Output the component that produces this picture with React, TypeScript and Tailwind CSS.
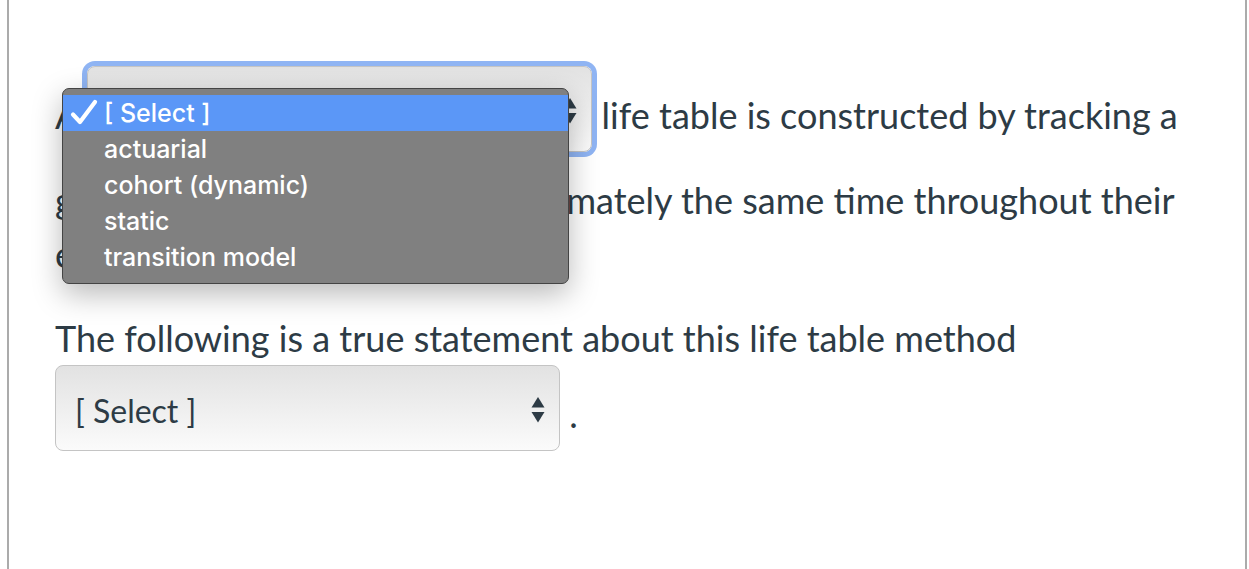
import React from "react";

const options = ["[ Select ]", "actuarial", "cohort (dynamic)", "static", "transition model"];

function Arrows() {
  return (
    <svg width="14" height="30" viewBox="0 0 14 30" className="shrink-0">
      <path d="M7 2 L13.5 12.5 L0.5 12.5 Z" fill="#2d3b45" />
      <path d="M0.5 17 L13.5 17 L7 27.5 Z" fill="#2d3b45" />
    </svg>
  );
}

function Check() {
  return (
    <svg width="28" height="28" viewBox="0 0 28 28">
      <path
        d="M3 15.5 L10 23 L25 3"
        fill="none"
        stroke="#fff"
        strokeWidth="4.2"
        strokeLinecap="round"
        strokeLinejoin="round"
      />
    </svg>
  );
}

function FakeSelect({ focused, label }: { focused?: boolean; label?: string }) {
  return (
    <span
      className={
        "inline-block align-[5px] w-[505px] h-[86px] rounded-[8px] border border-[#c4c4c4] bg-gradient-to-b from-[#e2e2e2] to-[#fbfbfb] text-[32px] " +
        (focused ? "shadow-[0_0_0_5px_#8fb4f3] mb-[21px]" : "")
      }
    >
      <span className="flex items-start justify-between pl-[19px] pr-[14px] pt-[25px] leading-[40px]">
        <span className="text-[#2d3b45]">{label ?? "\u00a0"}</span>
        <span className="self-center -mt-[2px]">
          <Arrows />
        </span>
      </span>
    </span>
  );
}

export default function App() {
  return (
    <div className="relative min-h-[569px] bg-white font-['Lato',sans-serif] text-[36px] leading-[54px] text-[#2d3b45]">
      <div className="ml-[7px] mr-[2px] min-h-[569px] border-x-2 border-[#ababab] pl-[46px] pt-[66px]">
        <p className="w-[1170px]">
          A <FakeSelect focused /> life table is constructed by tracking a
          <br />
          <span className="tracking-[-0.2px]">group of individuals born approxi</span>mately the same time
          throughout their
          <br />
          entire lives.
        </p>
        <p className="mt-[30px]">
          The following is a true statement about this life table method
          <br />
          <FakeSelect label="[ Select ]" /> .
        </p>
      </div>

      {/* open native popup */}
      <div className="absolute left-[62px] top-[88px] w-[507px] rounded-[7px] border border-[#444] bg-[#808080] pt-[6px] pb-[8px] shadow-[0_10px_30px_rgba(0,0,0,0.28)] font-['Inter',sans-serif] text-[25px] font-medium text-white">
        {options.map((o, i) => (
          <div
            key={o}
            className={"flex h-[36px] items-center " + (i === 0 ? "bg-[#5b97f7]" : "")}
          >
            <span className="flex w-[41px] justify-center pl-[1px]">{i === 0 ? <Check /> : null}</span>
            <span className="leading-none">{o}</span>
          </div>
        ))}
      </div>
    </div>
  );
}
